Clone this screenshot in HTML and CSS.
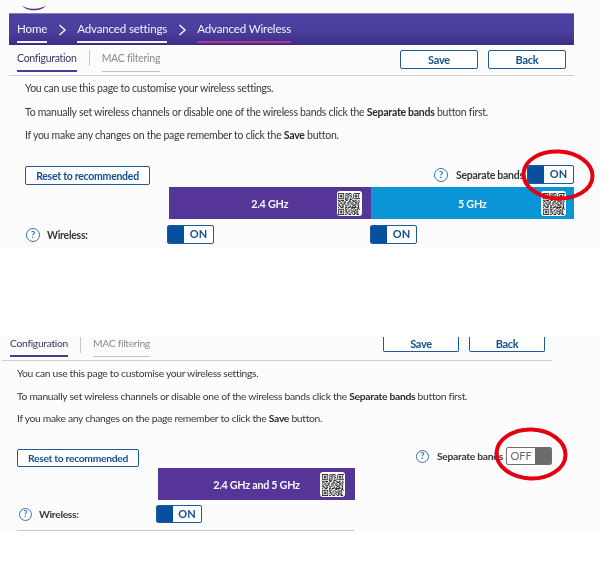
FILE: index.html
```html
<!DOCTYPE html>
<html lang="en">
<head>
<meta charset="utf-8">
<title>Advanced Wireless</title>
<link rel="stylesheet" href="styles.css">
</head>
<body>
<svg class="defs" width="0" height="0" aria-hidden="true">
  <symbol id="qr" viewBox="0 0 25 25">
    <path fill="none" stroke="#111" stroke-width="1" d="M0 .5h7m2 0h2m1 0h3m3 0h7M0 1.5h1m5 0h1m1 0h1m2 0h2m2 0h1m1 0h1m5 0h1M0 2.5h1m1 0h3m1 0h1m2 0h3m1 0h1m3 0h1m1 0h3m1 0h1M0 3.5h1m1 0h3m1 0h1m1 0h1m2 0h1m1 0h3m1 0h1m1 0h3m1 0h1M0 4.5h1m1 0h3m1 0h1m3 0h2m3 0h1m1 0h1m1 0h3m1 0h1M0 5.5h1m5 0h1m1 0h2m1 0h1m2 0h1m2 0h1m5 0h1M0 6.5h7m1 0h1m1 0h1m1 0h1m1 0h1m1 0h1m1 0h7M8 7.5h3m2 0h3M0 8.5h2m1 0h4m2 0h2m2 0h1m2 0h2m1 0h2m2 0h1M1 9.5h2m2 0h1m2 0h1m3 0h3m2 0h3m2 0h1m1 0h1M0 10.5h1m2 0h1m2 0h3m2 0h1m1 0h1m2 0h1m2 0h3m1 0h1M2 11.5h3m2 0h1m2 0h3m1 0h2m1 0h1m2 0h2m1 0h1M0 12.5h2m2 0h1m1 0h3m3 0h1m2 0h2m2 0h2m1 0h2M1 13.5h1m2 0h3m3 0h2m1 0h1m2 0h3m1 0h1m2 0h1M0 14.5h3m2 0h1m2 0h2m1 0h1m2 0h1m2 0h3m2 0h2M2 15.5h2m1 0h2m2 0h1m3 0h2m1 0h1m2 0h2m2 0h1M0 16.5h1m2 0h3m2 0h2m1 0h3m1 0h6m1 0h2M8 17.5h1m2 0h1m3 0h2m1 0h1m3 0h2M0 18.5h7m1 0h3m3 0h1m2 0h1m1 0h1m1 0h2m1 0h1M0 19.5h1m5 0h1m2 0h1m2 0h2m1 0h1m3 0h2m1 0h1M0 20.5h1m1 0h3m1 0h1m1 0h2m2 0h1m2 0h6m1 0h1M0 21.5h1m1 0h3m1 0h1m2 0h3m1 0h1m2 0h1m1 0h1m2 0h2M0 22.5h1m1 0h3m1 0h1m1 0h1m1 0h1m3 0h2m2 0h3m1 0h1M0 23.5h1m5 0h1m3 0h2m1 0h1m2 0h1m1 0h2m1 0h2M0 24.5h7m1 0h2m2 0h3m2 0h2m2 0h3"/>
  </symbol>
</svg>

<section class="panel panel-top">
  <svg class="logo" viewBox="0 0 26 6" aria-hidden="true"><path d="M1 0c4 5 19 5 24 0c-3 7-21 7-24 0z"/></svg>
  <nav class="crumbs">
    <a class="crumb">Home</a>
    <svg class="chev" viewBox="0 0 9 12" aria-hidden="true"><path d="M1.500 1l5.500 5l-5.500 5"/></svg>
    <a class="crumb">Advanced settings</a>
    <svg class="chev" viewBox="0 0 9 12" aria-hidden="true"><path d="M1.500 1l5.500 5l-5.500 5"/></svg>
    <a class="crumb crumb-current">Advanced Wireless</a>
  </nav>
  <div class="tabbar">
    <div class="tabs">
      <a class="tab tab-active">Configuration</a>
      <span class="tab-sep"></span>
      <a class="tab">MAC filtering</a>
    </div>
    <div class="actions">
      <button class="btn btn-action">Save</button>
      <button class="btn btn-action">Back</button>
    </div>
  </div>
  <div class="intro">
    <p>You can use this page to customise your wireless settings.</p>
    <p>To manually set wireless channels or disable one of the wireless bands click the <b>Separate bands</b> button first.</p>
    <p>If you make any changes on the page remember to click the <b>Save</b> button.</p>
  </div>
  <div class="controls">
    <button class="btn btn-reset">Reset to recommended</button>
    <div class="separate">
      <span class="help">?</span>
      <span class="sep-label">Separate bands</span>
      <span class="toggle toggle-on"><i></i><span>ON</span></span>
    </div>
  </div>
  <div class="bands">
    <div class="band band-purple"><span>2.4 GHz</span><span class="qr"><svg><use href="#qr"/></svg></span></div>
    <div class="band band-blue"><span>5 GHz</span><span class="qr"><svg><use href="#qr"/></svg></span></div>
  </div>
  <div class="wireless">
    <div class="wl-label"><span class="help">?</span><b>Wireless:</b></div>
    <span class="toggle toggle-on"><i></i><span>ON</span></span>
    <span class="toggle toggle-on"><i></i><span>ON</span></span>
  </div>
  <svg class="ring ring-top" viewBox="0 0 74 52" aria-hidden="true"><ellipse cx="37" cy="26" rx="34.500" ry="23.500" transform="rotate(3 37 26)"/></svg>
</section>

<section class="panel panel-bottom">
  <div class="tabbar">
    <div class="tabs">
      <a class="tab tab-active">Configuration</a>
      <span class="tab-sep"></span>
      <a class="tab">MAC filtering</a>
    </div>
    <div class="actions">
      <button class="btn btn-action">Save</button>
      <button class="btn btn-action">Back</button>
    </div>
  </div>
  <div class="intro">
    <p>You can use this page to customise your wireless settings.</p>
    <p>To manually set wireless channels or disable one of the wireless bands click the <b>Separate bands</b> button first.</p>
    <p>If you make any changes on the page remember to click the <b>Save</b> button.</p>
  </div>
  <div class="controls">
    <button class="btn btn-reset">Reset to recommended</button>
    <div class="separate">
      <span class="help">?</span>
      <span class="sep-label">Separate bands</span>
      <span class="toggle toggle-off"><span>OFF</span><i></i></span>
    </div>
  </div>
  <div class="bands">
    <div class="band band-purple"><span>2.4 GHz and 5 GHz</span><span class="qr"><svg><use href="#qr"/></svg></span></div>
  </div>
  <div class="wireless">
    <div class="wl-label"><span class="help">?</span><b>Wireless:</b></div>
    <span class="toggle toggle-on"><i></i><span>ON</span></span>
  </div>
  <svg class="ring ring-bottom" viewBox="0 0 74 54" aria-hidden="true"><ellipse cx="37" cy="27" rx="34.500" ry="24.500" transform="rotate(2 37 27)"/></svg>
</section>
</body>
</html>
```
FILE: styles.css
```css
* { box-sizing: border-box; }
html, body { margin: 0; padding: 0; }
body {
  width: 611px;
  height: 567px;
  overflow: hidden;
  background: #fff;
  font-family: "Lato", "Noto Sans", sans-serif;
  color: #38383b;
}
.defs { position: absolute; }

.panel {
  position: relative;
  width: 600px;
  background: #fcfcfd;
  letter-spacing: var(--ls);
  filter: blur(0.3px);
}

/* top capture */
.panel-top {
  height: 248px;
  padding-top: 5px;
  --fs: 10.500px;
  --ls: -0.270px;
  --gap: 7.500px;
  --tabbar-h: 31px;
  --bar-l: 9px;
  --bar-w: 565px;
  --tab-l: 8px;
  --act-r: 8px;
  --act-w: 78px;
  --act-gap: 10px;
  --txt-l: 16px;
  --ctrl-w: 549px;
  --band-w: 201.500px;
  --tog-w: 47px;
  --tog-h: 19px;
}
.logo { display: block; width: 26px; height: 6px; margin-left: 21px; }
.logo path { fill: #5a2d91; }

.crumbs {
  display: flex;
  align-items: flex-start;
  height: 32px;
  margin: 2px 0 0 9px;
  width: 565px;
  padding: 0 0 0 8px;
  background: linear-gradient(#4c40a0 0, #4b3f9e 55%, #3b2e84 100%);
  border-top: 1px solid #8a84bd;
}
.crumb {
  display: block;
  height: 29px;
  padding-top: 6px;
  font-size: 11.600px;
  letter-spacing: -0.180px;
  line-height: 18px;
  color: #f2f1f8;
  border-bottom: 2px solid #f5f5fa;
}
.crumb-current { border-bottom-color: #b5339b; }
.chev { width: 9px; height: 12px; margin: 10px 10px 0 11px; flex: none; }
.chev path { fill: none; stroke: #f2f1f8; stroke-width: 1.500; }

.tabbar {
  display: flex;
  justify-content: space-between;
  align-items: flex-start;
  width: var(--bar-w);
  height: var(--tabbar-h);
  margin-left: var(--bar-l);
  padding-left: var(--tab-l);
  padding-right: var(--act-r);
  border-bottom: 1px solid #d0d0d4;
}
.tabs { display: flex; align-items: flex-start; }
.tab {
  display: block;
  height: 27px;
  padding-top: 5px;
  font-size: var(--fs);
  line-height: 16px;
  color: #8a8a8f;
  border-bottom: 1px solid #c4c4c8;
}
.tab-active { color: #3a3668; border-bottom: 2px solid #4f3a95; }
.tab-sep { width: 1px; height: 16px; margin: 5px 12px 0; background: #c8c8cc; }

.actions { display: flex; gap: var(--act-gap); padding-top: 5px; }
.btn {
  display: block;
  padding: 0;
  font-family: inherit;
  font-weight: 700;
  letter-spacing: inherit;
  color: #14508f;
  background: #fff;
  border: 1px solid #1d5a9c;
  border-radius: 2px;
}
.btn-action { width: var(--act-w); height: 19px; font-size: 11px; line-height: 16px; }

.intro { padding: 4px 0 0 var(--txt-l); margin-left: var(--bar-l); }
.intro p {
  margin: 0 0 var(--gap);
  font-size: var(--fs);
  line-height: 16px;
  white-space: nowrap;
}
.intro b { color: #2b2b2e; }

.controls {
  display: flex;
  justify-content: space-between;
  align-items: flex-start;
  width: var(--ctrl-w);
  height: 21px;
  margin: 23px 0 0 calc(var(--bar-l) + var(--txt-l));
}
.btn-reset { width: 125px; height: 19px; font-size: var(--fs); line-height: 16px; white-space: nowrap; }
.separate { display: flex; align-items: center; margin-top: -1px; }
.help {
  display: block;
  width: 14px;
  height: 14px;
  flex: none;
  border: 1.500px solid #2f74b5;
  border-radius: 50%;
  background: #fff;
  color: #2f74b5;
  font-size: 10px;
  font-weight: 700;
  line-height: 11px;
  letter-spacing: 0;
  text-align: center;
}
.sep-label {
  width: 71px;
  margin-left: 8px;
  font-size: var(--fs);
  font-weight: 700;
  line-height: 16px;
  white-space: nowrap;
  color: #38383b;
}

.toggle {
  display: flex;
  flex: none;
  width: var(--tog-w);
  height: var(--tog-h);
  overflow: hidden;
  border: 1px solid #1d5a9c;
  border-radius: 2px;
  background: #fff;
  font-size: 11px;
  font-weight: 700;
  letter-spacing: 0;
  line-height: 16px;
  text-align: center;
  color: #14508f;
}
.toggle i { display: block; width: 16px; background: #06509f; flex: none; }
.toggle span { flex: 1; }
.toggle-off { border-color: #707074; color: #66666a; font-weight: 400; }
.toggle-off i { background: #6a6a6d; }

.bands { display: flex; height: 32px; margin-left: 169px; }
.band {
  position: relative;
  display: flex;
  align-items: center;
  justify-content: center;
  width: var(--band-w);
  color: #f6f4fa;
  font-size: 10.800px;
  font-weight: 700;
}
.band-purple { background: #553597; }
.band-blue { background: #0a96d6; width: 203.500px; }
.qr {
  position: absolute;
  right: 8px;
  top: 4px;
  width: 25px;
  height: 25px;
  padding: 1.500px;
  background: #fff;
  border-radius: 3px;
}
.band-purple .qr { right: 9px; }
.qr svg { display: block; width: 22px; height: 22px; }

.wireless {
  display: flex;
  align-items: center;
  height: var(--tog-h);
  margin-top: 6px;
  margin-left: 26px;
}
.wl-label { display: flex; align-items: center; gap: 7px; width: 141px; font-size: var(--fs); line-height: 16px; }
.wl-label b { color: #38383b; font-weight: 700; }
.wireless .toggle + .toggle { margin-left: 156px; }

.ring { position: absolute; display: block; }
.ring ellipse { fill: none; stroke: #e4000f; stroke-width: 4; }
.ring-top { left: 521px; top: 149px; width: 74px; height: 52px; }
.ring-bottom { left: 494px; top: 90px; width: 74px; height: 54px; }

/* bottom capture */
.panel-bottom {
  height: 194px;
  margin-top: 89px;
  --fs: 10.300px;
  --ls: -0.300px;
  --gap: 6.700px;
  --tabbar-h: 24px;
  --bar-l: 2px;
  --bar-w: 550px;
  --tab-l: 8px;
  --act-r: 7px;
  --act-w: 76px;
  --act-gap: 10px;
  --txt-l: 15px;
  --ctrl-w: 535px;
  --band-w: 197px;
  --tog-w: 46px;
  --tog-h: 18px;
}
.panel-bottom .tab { height: 20px; padding-top: 0; line-height: 12px; }
.panel-bottom .tab-sep { margin-top: 0; height: 16px; }
.panel-bottom .actions { padding-top: 0; }
.panel-bottom .btn-action { height: 15px; border-top: 0; border-radius: 0 0 2px 2px; line-height: 12px; }
.panel-bottom .controls { height: 20px; }
.panel-bottom .btn-reset { width: 122px; height: 18px; }
.panel-bottom .bands { margin-left: 158px; margin-top: -1px; }
.panel-bottom .qr { right: 10px; }
.panel-bottom .separate { margin-top: -2px; }
.panel-bottom .sep-label { width: 69px; }
.panel-bottom .help { width: 13px; height: 13px; font-size: 9.500px; line-height: 10px; }
.panel-bottom .wireless {
  margin-left: 19px;
  margin-top: 5px;
}
.panel-bottom .wl-label { width: 137px; }
.panel-bottom .wireless::after {
  content: "";
  position: absolute;
  left: 17px;
  top: 193px;
  width: 337px;
  height: 1px;
  background: #c8c8cc;
}
```
